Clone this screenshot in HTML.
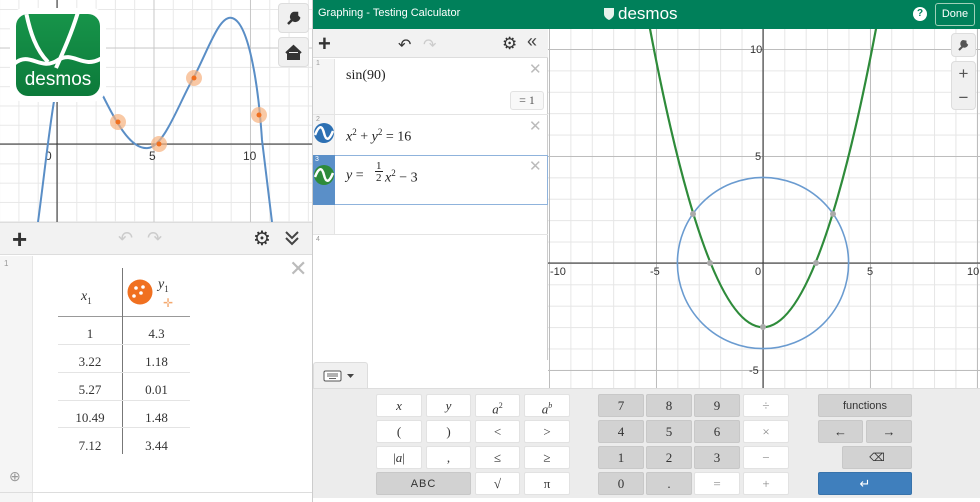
<!DOCTYPE html>
<html><head><meta charset="utf-8"><style>
*{margin:0;padding:0;box-sizing:border-box}
body{width:980px;height:502px;overflow:hidden;background:#fff;font-family:"Liberation Sans",sans-serif;position:relative}
.abs{position:absolute}
.m{font-family:"Liberation Serif",serif}
.i{font-style:italic}
.btn{position:absolute;background:#f0f0f0;border:1px solid #ddd;border-radius:4px}
.key{position:absolute;height:23px;background:#fff;border:1px solid #e2e2e2;border-radius:2px;font-family:"Liberation Serif",serif;font-size:13px;color:#333;text-align:center;line-height:22px}
.g{background:#d2d2d2;border-color:#c8c8c8}
</style></head><body>

<!-- LEFT GRAPH -->
<div class="abs" style="left:0;top:0;width:312px;height:222px;overflow:hidden;
background-image:
linear-gradient(to right,#c8c8c8 1px,transparent 1px),
linear-gradient(to bottom,#c8c8c8 1px,transparent 1px),
linear-gradient(to right,#e8e8e8 1px,transparent 1px),
linear-gradient(to bottom,#e8e8e8 1px,transparent 1px);
background-size:96.5px 96.5px,96.5px 96.5px,19.3px 19.3px,19.3px 19.3px;
background-position:57px 47.5px,57px 47.5px,57px 9px,57px 9px;">
<svg class="abs" style="left:0;top:0" width="312" height="222">
<line x1="0" y1="144" x2="312" y2="144" stroke="#333" stroke-width="1"/>
<line x1="57" y1="0" x2="57" y2="222" stroke="#333" stroke-width="1"/>
<text x="45" y="160" font-size="12" fill="#333">0</text>
<text x="149" y="160" font-size="12" fill="#333">5</text>
<text x="243" y="160" font-size="12" fill="#333">10</text>
<path d="M38,222 C45,170 50,120 56,90 C62,55 80,50 100,90 C115,120 130,150 148,148 C165,146 180,100 195,75 C210,45 220,15 232,18 C248,22 258,80 262,140 L272,222" fill="none" stroke="#5a8ec6" stroke-width="2"/>
<g fill="#f7b27f" opacity=".7"><circle cx="118" cy="122" r="8"/><circle cx="159" cy="144" r="8"/><circle cx="194" cy="78" r="8"/><circle cx="259" cy="115" r="8"/></g>
<g fill="#f07020"><circle cx="118" cy="122" r="2.5"/><circle cx="159" cy="144" r="2.5"/><circle cx="194" cy="78" r="2.5"/><circle cx="259" cy="115" r="2.5"/></g>
</svg>
<!-- logo -->
<div class="abs" style="left:10px;top:8px;width:96px;height:94px;background:#fff;border-radius:14px"></div>
<div class="abs" style="left:16px;top:14px;width:84px;height:82px;border-radius:12px;background:linear-gradient(#17944a,#0c7a3a);overflow:hidden">
<svg class="abs" style="left:0;top:0" width="84" height="82"><path d="M10,-2 C14,18 20,36 32,48 M62,-2 C56,18 48,36 40,54" stroke="#fff" stroke-width="4" fill="none"/><path d="M-2,50 C14,36 24,58 42,46 C58,36 66,56 86,44" stroke="#fff" stroke-width="4" fill="none"/></svg>
<div class="abs" style="left:0;width:84px;top:55px;text-align:center;color:#fff;font-size:19px">desmos</div>
</div>
<div class="btn" style="left:278px;top:3px;width:31px;height:30px"><svg width="29" height="28"><path d="M9,20 L16,13 M15,9 a4,4 0 1 0 5,5 l-2,-2 v-3 z" stroke="#333" stroke-width="2.5" fill="#333"/></svg></div>
<div class="btn" style="left:278px;top:37px;width:31px;height:30px"><svg width="29" height="28"><path d="M7,15 L14.5,8 L22,15 M9,14 V21 H20 V14" stroke="#333" stroke-width="2" fill="#333"/></svg></div>
</div>

<!-- LEFT TOOLBAR -->
<div class="abs" style="left:0;top:222px;width:312px;height:33px;background:#f2f2f2;border-top:1px solid #ddd;border-bottom:1px solid #ddd"></div>
<div class="abs" style="left:12px;top:224px;font-size:26px;color:#333;font-weight:bold">+</div>
<div class="abs" style="left:118px;top:228px;font-size:18px;color:#ccc">&#x21B6;</div>
<div class="abs" style="left:147px;top:228px;font-size:18px;color:#ccc">&#x21B7;</div>
<div class="abs" style="left:253px;top:226px;font-size:20px;color:#333">&#x2699;</div>
<svg class="abs" style="left:283px;top:229px" width="18" height="18"><path d="M3,3 L9,9 L15,3 M3,9 L9,15 L15,9" stroke="#444" stroke-width="2" fill="none"/></svg>

<!-- LEFT LIST -->
<div class="abs" style="left:0;top:256px;width:33px;height:246px;background:#f5f5f5;border-right:1px solid #e6e6e6"></div>
<div class="abs" style="left:4px;top:259px;font-size:8px;color:#999">1</div>
<div class="abs" style="left:0;top:492px;width:312px;height:1px;background:#ddd"></div>
<div class="abs" style="left:289px;top:256px;font-size:22px;color:#bbb">&#x2715;</div>
<div class="abs" style="left:9px;top:468px;font-size:14px;color:#999">&#x2295;</div>
<div class="abs" style="left:312px;top:0;width:1px;height:502px;background:#ccc"></div>

<div class="abs" style="left:58px;top:316px;width:132px;height:1px;background:#999"></div>
<div class="abs" style="left:122px;top:268px;width:1px;height:186px;background:#777"></div>
<div class="abs" style="left:58px;top:344px;width:132px;height:1px;background:#e4e4e4"></div>
<div class="abs" style="left:58px;top:372px;width:132px;height:1px;background:#e4e4e4"></div>
<div class="abs" style="left:58px;top:400px;width:132px;height:1px;background:#e4e4e4"></div>
<div class="abs" style="left:58px;top:427px;width:132px;height:1px;background:#e4e4e4"></div>
<div class="abs m i" style="left:81px;top:289px;font-size:14px;color:#333">x<sub style="font-style:normal;font-size:9px">1</sub></div>
<div class="abs m i" style="left:158px;top:277px;font-size:14px;color:#333">y<sub style="font-style:normal;font-size:9px">1</sub></div>
<svg class="abs" style="left:127px;top:279px" width="26" height="26"><circle cx="13" cy="13" r="12.5" fill="#f07020"/><g fill="#fff"><circle cx="9" cy="9" r="1.8"/><circle cx="16" cy="8" r="1.8"/><circle cx="14" cy="14" r="1.8"/><circle cx="7" cy="17" r="1.8"/></g></svg>
<div class="abs" style="left:163px;top:296px;font-size:12px;color:#f4a86e">&#x271B;</div>
<div class="abs m" style="left:58px;width:64px;text-align:center;top:320px;font-size:13px;color:#333;line-height:28px">1<br>3.22<br>5.27<br>10.49<br>7.12</div>
<div class="abs m" style="left:123px;width:67px;text-align:center;top:320px;font-size:13px;color:#333;line-height:28px">4.3<br>1.18<br>0.01<br>1.48<br>3.44</div>

<!-- RIGHT GRAPH -->
<div class="abs" style="left:548px;top:29px;width:432px;height:360px;overflow:hidden;
background-image:
linear-gradient(to right,#bdbdbd 1px,transparent 1px),
linear-gradient(to bottom,#bdbdbd 1px,transparent 1px),
linear-gradient(to right,#e6e6e6 1px,transparent 1px),
linear-gradient(to bottom,#e6e6e6 1px,transparent 1px);
background-size:107px 107px,107px 107px,21.4px 21.4px,21.4px 21.4px;
background-position:1px 20px,1px 20px,1px 20px,1px 20px;">
<svg class="abs" style="left:-548px;top:-29px" width="980" height="420">
<line x1="548" y1="263" x2="980" y2="263" stroke="#333"/>
<line x1="763" y1="0" x2="763" y2="420" stroke="#333"/>
<g font-size="11" fill="#333" font-family="Liberation Sans"><text x="550" y="275">-10</text><text x="650" y="275">-5</text><text x="755" y="275">0</text><text x="867" y="275">5</text><text x="967" y="275">10</text><text x="750" y="53">10</text><text x="755" y="160">5</text><text x="749" y="374">-5</text></g>
<circle cx="763" cy="263" r="85.6" fill="none" stroke="#6a9bd0" stroke-width="1.6"/>
<path d="M-7,21.5 Q0,-27.5 7,21.5" transform="translate(763,263) scale(21.4,-21.4)" fill="none" stroke="#2e8b3a" stroke-width="2.2" vector-effect="non-scaling-stroke"/>
<g fill="#aaa"><circle cx="693" cy="214" r="3"/><circle cx="833" cy="214" r="3"/><circle cx="710" cy="263" r="3"/><circle cx="816" cy="263" r="3"/><circle cx="763" cy="327" r="3"/></g>
</svg>
</div>
<div class="btn" style="left:951px;top:33px;width:25px;height:24px"><svg width="23" height="22"><path d="M7,16 L12,11 M11,7 a3,3 0 1 0 4,4 l-1.5,-1.5 v-2 z" stroke="#555" stroke-width="2" fill="#555"/></svg></div>
<div class="btn" style="left:951px;top:61px;width:25px;height:49px;text-align:center;font-size:17px;line-height:24px;color:#555">+<br>&#x2212;</div>

<!-- HEADER -->
<div class="abs" style="left:313px;top:0;width:667px;height:29px;background:#00805a"></div>
<div class="abs" style="left:318px;top:7px;font-size:11px;color:#fff">Graphing - Testing Calculator</div>
<svg class="abs" style="left:603px;top:7px" width="12" height="14"><path d="M1,1 H11 V7 C11,10 8,12 6,13 C4,12 1,10 1,7 Z" fill="#e6f2ec"/></svg>
<div class="abs" style="left:618px;top:4px;font-size:17px;color:#fff">desmos</div>
<div class="abs" style="left:913px;top:7px;width:14px;height:14px;border-radius:7px;background:#fff;color:#00805a;font-size:10px;font-weight:bold;text-align:center;line-height:14px">?</div>
<div class="abs" style="left:935px;top:3px;width:40px;height:23px;border:1px solid #9fd0b8;border-radius:3px;color:#fff;font-size:11px;text-align:center;line-height:21px">Done</div>

<!-- EXPRESSION LIST -->
<div class="abs" style="left:313px;top:29px;width:235px;height:331px;background:#fff;border-right:1px solid #ccc"></div>
<div class="abs" style="left:313px;top:29px;width:235px;height:29px;background:#f2f2f2;border-bottom:1px solid #ddd"></div>
<div class="abs" style="left:318px;top:31px;font-size:22px;color:#333;font-weight:bold">+</div>
<div class="abs" style="left:398px;top:35px;font-size:16px;color:#333">&#x21B6;</div>
<div class="abs" style="left:423px;top:35px;font-size:16px;color:#ccc">&#x21B7;</div>
<div class="abs" style="left:502px;top:34px;font-size:17px;color:#333">&#x2699;</div>
<div class="abs" style="left:527px;top:31px;font-size:18px;color:#444">&#x00AB;</div>
<div class="abs" style="left:313px;top:59px;width:22px;height:176px;background:#f5f5f5;border-right:1px solid #e4e4e4"></div>
<div class="abs" style="left:313px;top:114px;width:235px;height:1px;background:#e4e4e4"></div>
<div class="abs" style="left:313px;top:234px;width:235px;height:1px;background:#e4e4e4"></div>
<div class="abs" style="left:316px;top:60px;font-size:7px;color:#999">1</div>
<div class="abs" style="left:316px;top:116px;font-size:7px;color:#999">2</div>
<div class="abs" style="left:316px;top:236px;font-size:7px;color:#999">4</div>
<div class="abs m" style="left:346px;top:68px;font-size:14px;color:#222">sin(90)</div>
<div class="abs m" style="left:510px;top:91px;width:34px;height:19px;border:1px solid #e2e2e2;background:#f8f8f8;border-radius:3px;font-size:12px;color:#555;text-align:center;line-height:17px">= 1</div>
<div class="abs" style="left:529px;top:60px;font-size:15px;color:#bbb">&#x2715;</div>
<svg class="abs" style="left:313px;top:122px" width="22" height="22"><circle cx="11" cy="11" r="10" fill="#2d70b3"/><path d="M2,13 C6,3 9,3 11,11 C13,19 16,19 20,9" stroke="#fff" stroke-width="2.5" fill="none"/></svg>
<div class="abs m" style="left:346px;top:127px;font-size:14px;color:#222"><i>x</i><sup style="font-size:9px">2</sup> + <i>y</i><sup style="font-size:9px">2</sup> = 16</div>
<div class="abs" style="left:529px;top:117px;font-size:15px;color:#bbb">&#x2715;</div>
<div class="abs" style="left:313px;top:155px;width:235px;height:50px;border:1px solid #8fb3dc"></div>
<div class="abs" style="left:313px;top:155px;width:22px;height:50px;background:#5a8fc8"></div>
<div class="abs" style="left:315px;top:156px;font-size:7px;color:#fff">3</div>
<svg class="abs" style="left:313px;top:164px" width="22" height="22"><circle cx="11" cy="11" r="10" fill="#2e8b3a"/><path d="M2,13 C6,3 9,3 11,11 C13,19 16,19 20,9" stroke="#fff" stroke-width="2.5" fill="none"/></svg>
<div class="abs m" style="left:346px;top:168px;font-size:14px;color:#222"><i>y</i> = </div>
<div class="abs m" style="left:375px;top:160px;font-size:11px;color:#222;line-height:12px;text-align:center">1<br><span style="border-top:1px solid #222;padding:0 1px">2</span></div>
<div class="abs m" style="left:385px;top:168px;font-size:14px;color:#222"><i>x</i><sup style="font-size:9px">2</sup> &#x2212; 3</div>
<div class="abs" style="left:529px;top:157px;font-size:15px;color:#bbb">&#x2715;</div>

<!-- KEYBOARD -->
<div class="abs" style="left:313px;top:360px;width:235px;height:29px;background:#fff"></div>
<div class="abs" style="left:313px;top:362px;width:55px;height:28px;background:#f0f0f0;border:1px solid #ddd;border-bottom:none;border-radius:3px 3px 0 0"><svg class="abs" style="left:9px;top:7px" width="34" height="12"><rect x="1" y="1" width="17" height="10" rx="1.5" fill="#fff" stroke="#555"/><path d="M4,4 h11 M4,6 h11 M6,8.5 h7" stroke="#666" stroke-width="1"/><path d="M24,4 h7 l-3.5,4 z" fill="#444"/></svg></div>
<div class="abs" style="left:313px;top:388px;width:667px;height:110px;background:#ececec;border-top:1px solid #ddd"></div>

<div class="key i" style="left:376px;top:394px;width:46px">x</div>
<div class="key i" style="left:426px;top:394px;width:45px">y</div>
<div class="key i" style="left:475px;top:394px;width:45px">a<sup style="font-style:normal;font-size:8px">2</sup></div>
<div class="key i" style="left:524px;top:394px;width:46px">a<sup style="font-size:8px">b</sup></div>
<div class="key" style="left:376px;top:420px;width:46px">(</div>
<div class="key" style="left:426px;top:420px;width:45px">)</div>
<div class="key" style="left:475px;top:420px;width:45px">&lt;</div>
<div class="key" style="left:524px;top:420px;width:46px">&gt;</div>
<div class="key" style="left:376px;top:446px;width:46px">|<i>a</i>|</div>
<div class="key" style="left:426px;top:446px;width:45px">,</div>
<div class="key" style="left:475px;top:446px;width:45px">&#x2264;</div>
<div class="key" style="left:524px;top:446px;width:46px">&#x2265;</div>
<div class="key g" style="left:376px;top:472px;width:95px;font-family:'Liberation Sans';font-size:11px;letter-spacing:1px">ABC</div>
<div class="key" style="left:475px;top:472px;width:45px">&#x221A;</div>
<div class="key" style="left:524px;top:472px;width:46px">&#x3C0;</div>

<div class="key g" style="left:598px;top:394px;width:46px">7</div>
<div class="key g" style="left:646px;top:394px;width:46px">8</div>
<div class="key g" style="left:694px;top:394px;width:46px">9</div>
<div class="key" style="left:743px;top:394px;width:46px;color:#888">&#xF7;</div>
<div class="key g" style="left:598px;top:420px;width:46px">4</div>
<div class="key g" style="left:646px;top:420px;width:46px">5</div>
<div class="key g" style="left:694px;top:420px;width:46px">6</div>
<div class="key" style="left:743px;top:420px;width:46px;color:#888">&#xD7;</div>
<div class="key g" style="left:598px;top:446px;width:46px">1</div>
<div class="key g" style="left:646px;top:446px;width:46px">2</div>
<div class="key g" style="left:694px;top:446px;width:46px">3</div>
<div class="key" style="left:743px;top:446px;width:46px;color:#888">&#x2212;</div>
<div class="key g" style="left:598px;top:472px;width:46px">0</div>
<div class="key g" style="left:646px;top:472px;width:46px">.</div>
<div class="key" style="left:694px;top:472px;width:46px;color:#888">=</div>
<div class="key" style="left:743px;top:472px;width:46px;color:#888">+</div>

<div class="key g" style="left:818px;top:394px;width:94px;font-family:'Liberation Sans';font-size:11px">functions</div>
<div class="key g" style="left:818px;top:420px;width:45px;font-family:'Liberation Sans'">&#x2190;</div>
<div class="key g" style="left:866px;top:420px;width:46px;font-family:'Liberation Sans'">&#x2192;</div>
<div class="key g" style="left:842px;top:446px;width:70px;font-family:'Liberation Sans';font-size:11px">&#x232B;</div>
<div class="key" style="left:818px;top:472px;width:94px;background:#3f7fbd;border-color:#3873ab;color:#fff;font-family:'Liberation Sans'">&#x21B5;</div>
</body></html>
